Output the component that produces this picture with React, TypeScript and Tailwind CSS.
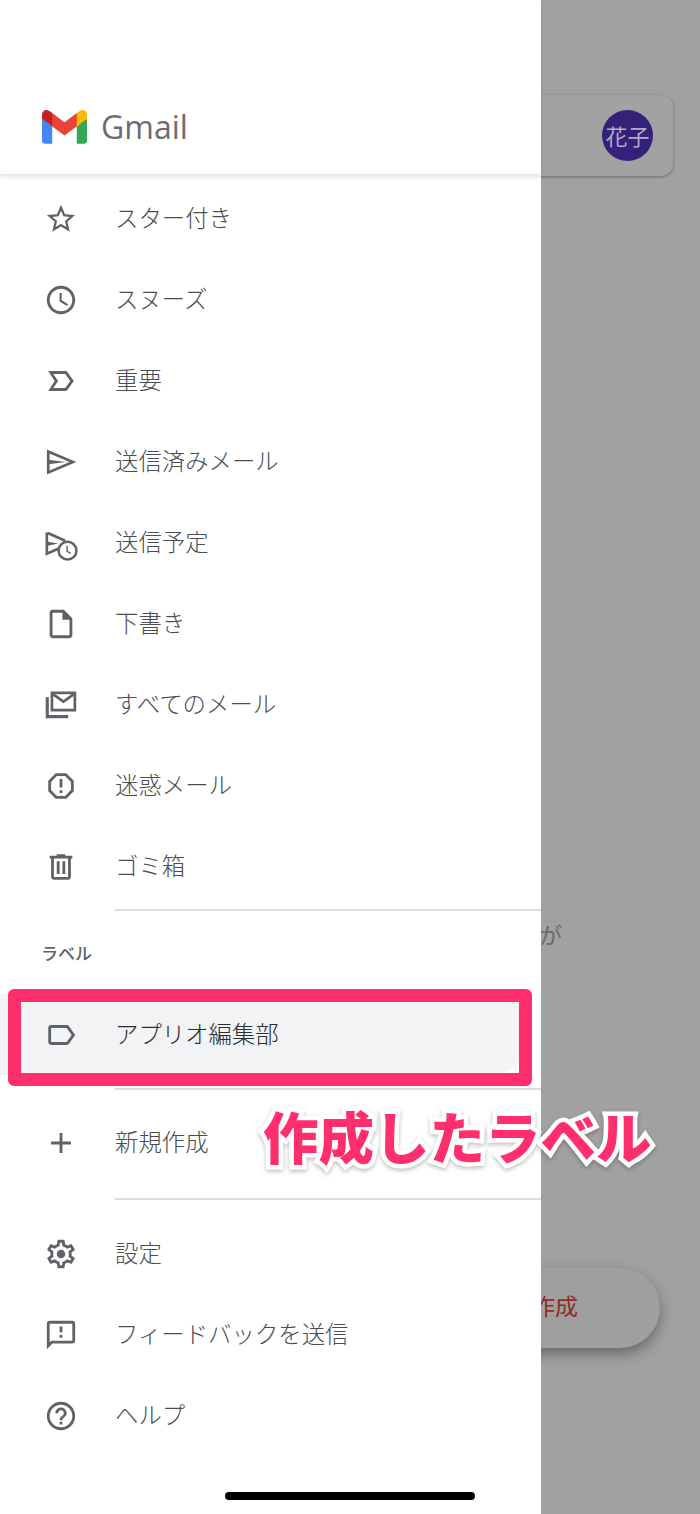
import type { ReactNode } from "react";

const cjk = { fontFamily: '"Noto Sans CJK JP", "Noto Sans", sans-serif' };

function Icon({ children, className = "" }: { children: ReactNode; className?: string }) {
  return (
    <svg viewBox="0 0 24 24" className={`h-[34px] w-[34px] fill-[#5f6368] ${className}`}>
      {children}
    </svg>
  );
}

const paths = {
  star: "M22 9.24l-7.19-.62L12 2 9.19 8.63 2 9.24l5.46 4.73L5.82 21 12 17.27 18.18 21l-1.63-7.03L22 9.24zM12 15.4l-3.76 2.27 1-4.28-3.32-2.88 4.38-.38L12 6.1l1.71 4.04 4.38.38-3.32 2.88 1 4.28L12 15.4z",
  clock: "M11.99 2C6.47 2 2 6.48 2 12s4.47 10 9.99 10C17.52 22 22 17.52 22 12S17.52 2 11.99 2zM12 20c-4.42 0-8-3.58-8-8s3.58-8 8-8 8 3.58 8 8-3.58 8-8 8zm.5-13H11v6l5.25 3.15.75-1.23-4.5-2.67z",
  important: "M15 19H3l4.5-7L3 5h12c.65 0 1.26.31 1.63.84L21 12l-4.37 6.16c-.37.52-.98.84-1.63.84zm-8.5-2H15l3.5-5L15 7H6.5l3.5 5-3.5 5z",
  draft: "M14 2H6c-1.1 0-2 .9-2 2v16c0 1.1.9 2 2 2h12c1.1 0 2-.9 2-2V8l-6-6zm4 18H6V4h7v5h5v11z",
  report: "M15.73 3H8.27L3 8.27v7.46L8.27 21h7.46L21 15.73V8.27L15.73 3zM19 14.9L14.9 19H9.1L5 14.9V9.1L9.1 5h5.8L19 9.1v5.8zM11 7h2v6h-2zM11 15h2v2h-2z",
  trash: "M15 4V3H9v1H4v2h1v13c0 1.1.9 2 2 2h10c1.1 0 2-.9 2-2V6h1V4h-5zm2 15H7V6h10v13zM9 8h2v9H9zm4 0h2v9h-2z",
  label: "M17.63 5.84C17.27 5.33 16.67 5 16 5L5 5.01C3.9 5.01 3 5.9 3 7v10c0 1.1.9 1.99 2 1.99L16 19c.67 0 1.27-.33 1.63-.84L22 12l-4.37-6.16zM16 17H5V7h11l3.55 5L16 17z",
  add: "M19 13h-6v6h-2v-6H5v-2h6V5h2v6h6v2z",
  settings: "M19.43 12.98c.04-.32.07-.64.07-.98 0-.34-.03-.66-.07-.98l2.11-1.65c.19-.15.24-.42.12-.64l-2-3.46c-.09-.16-.26-.25-.44-.25-.06 0-.12.01-.17.03l-2.49 1c-.52-.4-1.08-.73-1.69-.98l-.38-2.65C14.46 2.18 14.25 2 14 2h-4c-.25 0-.46.18-.49.42l-.38 2.65c-.61.25-1.17.59-1.69.98l-2.49-1c-.06-.02-.12-.03-.18-.03-.17 0-.34.09-.43.25l-2 3.46c-.13.22-.07.49.12.64l2.11 1.65c-.04.32-.07.65-.07.98 0 .33.03.66.07.98l-2.11 1.65c-.19.15-.24.42-.12.64l2 3.46c.09.16.26.25.44.25.06 0 .12-.01.17-.03l2.49-1c.52.4 1.08.73 1.69.98l.38 2.65c.03.24.24.42.49.42h4c.25 0 .46-.18.49-.42l.38-2.65c.61-.25 1.17-.59 1.69-.98l2.49 1c.06.02.12.03.18.03.17 0 .34-.09.43-.25l2-3.46c.12-.22.07-.49-.12-.64l-2.11-1.65zm-1.98-1.71c.04.31.05.52.05.73 0 .21-.02.43-.05.73l-.14 1.13.89.7 1.08.84-.7 1.21-1.27-.51-1.04-.42-.9.68c-.43.32-.84.56-1.25.73l-1.06.43-.16 1.13-.2 1.35h-1.4l-.19-1.35-.16-1.13-1.06-.43c-.43-.18-.83-.41-1.23-.71l-.91-.7-1.06.43-1.27.51-.7-1.21 1.08-.84.89-.7-.14-1.13c-.03-.31-.05-.54-.05-.74s.02-.43.05-.73l.14-1.13-.89-.7-1.08-.84.7-1.21 1.27.51 1.04.42.9-.68c.43-.32.84-.56 1.25-.73l1.06-.43.16-1.13.2-1.35h1.39l.19 1.35.16 1.13 1.06.43c.43.18.83.41 1.23.71l.91.7 1.06-.43 1.27-.51.7 1.21-1.07.85-.89.7.14 1.13z",
  feedback: "M20 2H4c-1.1 0-1.99.9-1.99 2L2 22l4-4h14c1.1 0 2-.9 2-2V4c0-1.1-.9-2-2-2zm0 14H5.17L4 17.17V4h16v12zM11 12h2v2h-2zm0-6h2v4h-2z",
  help: "M11 18h2v-2h-2v2zm1-16C6.48 2 2 6.48 2 12s4.48 10 10 10 10-4.48 10-10S17.52 2 12 2zm0 18c-4.41 0-8-3.59-8-8s3.59-8 8-8 8 3.59 8 8-3.59 8-8 8zm0-14c-2.21 0-4 1.79-4 4h2c0-1.1.9-2 2-2s2 .9 2 2c0 2-3 1.75-3 5h2c0-2.25 3-2.5 3-5 0-2.21-1.79-4-4-4z",
};

function SendOutline() {
  return (
    <svg viewBox="0 0 24 24" className="h-[34px] w-[34px]">
      <path d="M3 4.6v14.8L20.4 12z" fill="none" stroke="#5f6368" strokeWidth="1.9" />
      <path d="M3 10.4L15.5 12 3 13.6z" fill="#5f6368" />
    </svg>
  );
}

function ScheduleSend() {
  return (
    <svg viewBox="0 0 24 24" className="h-[34px] w-[34px] overflow-visible">
      <path d="M2 4.5v15l8-3.4" fill="none" stroke="#5f6368" strokeWidth="1.9" />
      <path d="M2.6 5 L15 10.4" fill="none" stroke="#5f6368" strokeWidth="1.9" />
      <path d="M2 10.9 L10 12.4 L2 14.2z" fill="#5f6368" />
      <circle cx="16.6" cy="17.4" r="6.3" fill="none" stroke="#5f6368" strokeWidth="1.8" />
      <path d="M16.3 14v3.9l2.6 1.5" fill="none" stroke="#5f6368" strokeWidth="1" />
    </svg>
  );
}

function AllMail() {
  return (
    <svg viewBox="0 0 24 24" className="h-[34px] w-[34px] overflow-visible">
      <path d="M5.6 3.4h16.2v12.2H5.6z" fill="none" stroke="#5f6368" strokeWidth="1.9" />
      <path d="M6 4.2l7.7 5.4 7.7-5.4" fill="none" stroke="#5f6368" strokeWidth="1.9" />
      <path d="M2.3 6.5v13.7h14.8" fill="none" stroke="#5f6368" strokeWidth="2.2" />
    </svg>
  );
}

function GmailLogo() {
  return (
    <svg viewBox="0 0 256 193" className="h-[34px] w-[45px]">
      <path fill="#4285F4" d="M58.182 192.05V93.14L27.507 65.077 0 49.504v125.091c0 9.658 7.825 17.455 17.455 17.455h40.727Z" />
      <path fill="#34A853" d="M197.818 192.05h40.727c9.659 0 17.455-7.826 17.455-17.455V49.505l-31.156 17.837-27.026 25.798v98.91Z" />
      <path fill="#EA4335" d="m58.182 93.14-4.174-38.647 4.174-36.989L128 69.868l69.818-52.364 4.67 34.992-4.67 40.644L128 145.504z" />
      <path fill="#FBBC04" d="M197.818 17.504V93.14L256 49.504V26.231c0-21.585-24.64-33.89-41.89-20.945l-16.292 12.218Z" />
      <path fill="#C5221F" d="M0 49.504l26.759 20.07L58.182 93.14V17.504L41.89 5.286C24.61-7.66 0 4.646 0 26.23v23.273Z" />
    </svg>
  );
}

function Row({ icon, label, dark }: { icon: ReactNode; label: string; dark?: boolean }) {
  return (
    <div className="flex h-[81px] items-center">
      <div className="ml-[44px] flex w-[71px] shrink-0">{icon}</div>
      <span className={`pb-[1px] text-[23.4px] font-light leading-none ${dark ? "text-[#2a2c2f]" : "text-[#4a4d51]"}`}>{label}</span>
    </div>
  );
}

function Divider() {
  return <div className="ml-[115px] h-[2px] bg-[#dcdde0]" />;
}

const mainItems: { icon: ReactNode; label: string }[] = [
  { icon: <Icon><path d={paths.star} /></Icon>, label: "スター付き" },
  { icon: <Icon><path d={paths.clock} /></Icon>, label: "スヌーズ" },
  { icon: <Icon><path d={paths.important} /></Icon>, label: "重要" },
  { icon: <SendOutline />, label: "送信済みメール" },
  { icon: <ScheduleSend />, label: "送信予定" },
  { icon: <Icon><path d={paths.draft} /></Icon>, label: "下書き" },
  { icon: <AllMail />, label: "すべてのメール" },
  { icon: <Icon><path d={paths.report} /></Icon>, label: "迷惑メール" },
  { icon: <Icon><path d={paths.trash} /></Icon>, label: "ゴミ箱" },
];

const footerItems: { icon: ReactNode; label: string }[] = [
  { icon: <Icon><path d={paths.settings} /><circle cx="12" cy="12" r="3" /></Icon>, label: "設定" },
  { icon: <Icon><path d={paths.feedback} /></Icon>, label: "フィードバックを送信" },
  { icon: <Icon><path d={paths.help} /></Icon>, label: "ヘルプ" },
];

export default function App() {
  return (
    <div className="relative h-[1514px] w-[700px] overflow-hidden bg-[#a1a1a1]" style={cjk}>
      {/* Dimmed inbox behind the drawer */}
      <div className="flex h-full flex-col">
        <div className="mx-[27px] mt-[95px] flex h-[81px] items-center justify-end rounded-xl bg-[#a2a2a2] pr-[20px] shadow-[0_1px_3px_rgba(0,0,0,0.35)]">
          <div className="flex h-[51px] w-[51px] items-center justify-center rounded-full bg-[#35207a] text-[22px] text-[#b3aac8]">花子</div>
        </div>
        <div className="ml-[539px] mt-[741px] text-[23px] leading-[34px] text-[#6a6a6a]">が</div>
        <div className="mr-[40px] mt-[317px] flex h-[80px] w-[300px] items-center justify-end self-end rounded-[40px] bg-[#9f9f9f] pb-[5px] pr-[82px] text-[23px] text-[#8f2d25] shadow-[0_6px_14px_rgba(0,0,0,0.35)]">作成</div>
        <div className="mt-[26px] h-px bg-[#9b9b9b]" />
      </div>

      {/* Drawer */}
      <div className="absolute inset-y-0 left-0 w-[541px] bg-white">
        <div className="flex h-[175px] items-end border-b border-[#e8e8ea] pb-[30px] pl-[42px] shadow-[0_2px_5px_rgba(60,64,67,0.14)]">
          <GmailLogo />
          <span className="ml-[14px] text-[32px] leading-[34px] text-[#6a6d71]" style={{ fontFamily: '"Open Sans", sans-serif' }}>Gmail</span>
        </div>
        <div className="pt-[3px]">
          {mainItems.map((item) => (
            <Row key={item.label} icon={item.icon} label={item.label} />
          ))}
        </div>
        <div className="pt-[2px]"><Divider /></div>
        <div className="flex h-[83px] items-center pl-[41px] pt-[1px] text-[17px] font-medium text-[#5f6368]">ラベル</div>
        <div className="mr-[11px] rounded-r-[41px] bg-[#f1f3f4]">
          <Row icon={<Icon><path d={paths.label} /></Icon>} label="アプリオ編集部" dark />
        </div>
        <div className="pt-[13px]"><Divider /></div>
        <div className="pt-[12px]">
          <Row icon={<Icon><path d={paths.add} /></Icon>} label="新規作成" />
        </div>
        <div className="pt-[15px]"><Divider /></div>
        <div className="pt-[13px]">
          {footerItems.map((item) => (
            <Row key={item.label} icon={item.icon} label={item.label} />
          ))}
        </div>
      </div>

      {/* Annotation overlay */}
      <div className="absolute left-[8px] top-[989px] h-[97px] w-[524px] rounded-md border-[13px] border-[#ff2f6d]" />
      <div className="absolute left-[263px] top-[1095px] text-[55.5px] font-black leading-[80px] whitespace-nowrap text-[#ff2f6d] [-webkit-text-stroke:9px_white] [paint-order:stroke_fill] drop-shadow-[0_2px_2px_rgba(0,0,0,0.25)]">作成したラベル</div>

      {/* Home indicator */}
      <div className="absolute bottom-[14px] left-[225px] h-[8px] w-[250px] rounded-full bg-black" />
    </div>
  );
}
